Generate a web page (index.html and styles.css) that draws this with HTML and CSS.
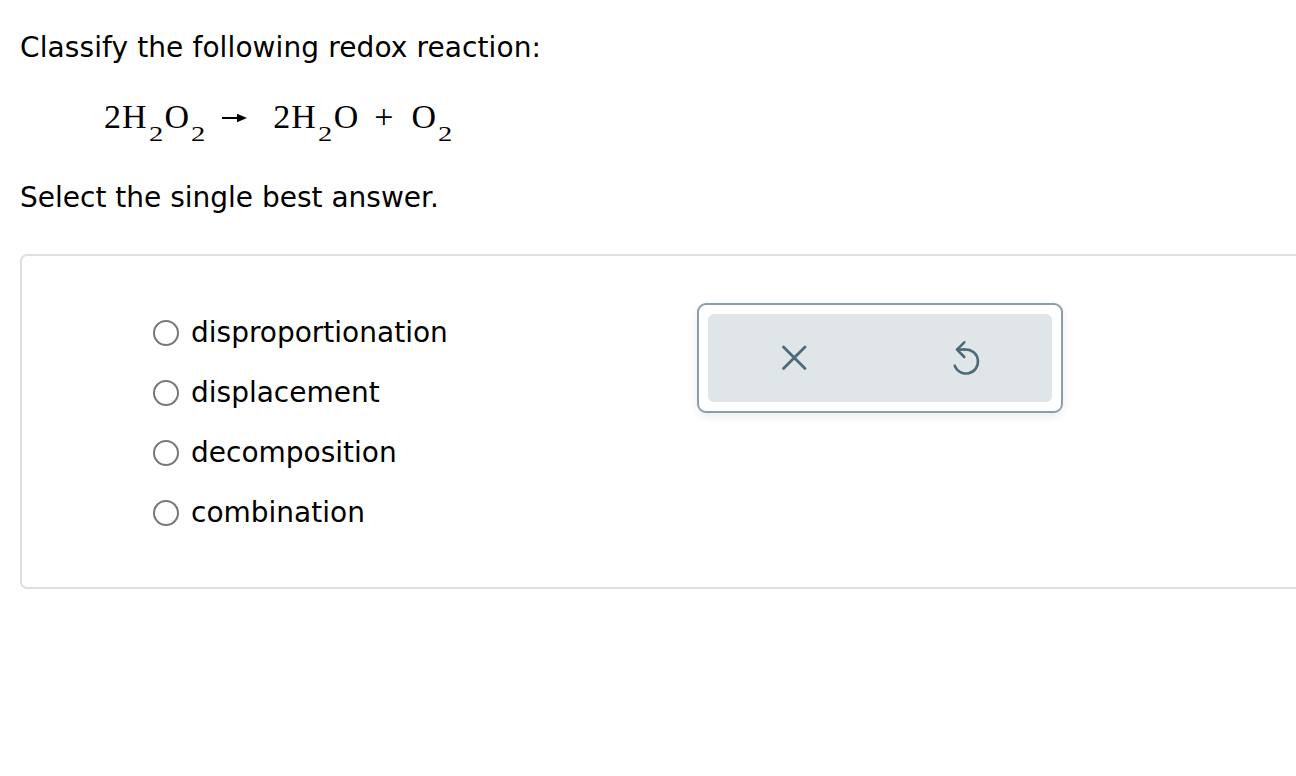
FILE: index.html
```html
<!DOCTYPE html>
<html>
<head>
<meta charset="utf-8">
<link rel="stylesheet" href="styles.css">
</head>
<body>
<div class="page">
  <p class="prompt">Classify the following redox reaction:</p>
  <div class="equation"><span class="term">2H<sub>2</sub>O<sub>2</sub></span><span class="arrow"><svg width="28" height="12" viewBox="0 0 28 12"><line x1="2" y1="6" x2="19" y2="6" stroke="#000" stroke-width="2"/><path d="M17 1.8 L27 6 L17 10.2 Z" fill="#000"/></svg></span><span class="term">2H<sub>2</sub>O</span><span class="plus">+</span><span class="term">O<sub>2</sub></span></div>
  <p class="instruction">Select the single best answer.</p>
  <div class="answer-box">
    <ul class="options">
      <li class="option"><span class="radio"></span><span>disproportionation</span></li>
      <li class="option"><span class="radio"></span><span>displacement</span></li>
      <li class="option"><span class="radio"></span><span>decomposition</span></li>
      <li class="option"><span class="radio"></span><span>combination</span></li>
    </ul>
    <div class="tools">
      <div class="tools-inner">
        <button class="tool" aria-label="Clear">
          <svg width="28" height="28" viewBox="0 0 28 28"><path d="M3.5 3 L25 24.5 M25 3 L3.5 24.5" stroke="#4b6b78" stroke-width="2.8" stroke-linecap="round" fill="none"/></svg>
        </button>
        <button class="tool" aria-label="Undo">
          <svg width="36" height="38" viewBox="0 0 36 38"><path d="M16 10.5 L18 10.5 A12 12 0 1 1 6.7 26.6" stroke="#4b6b78" stroke-width="2.6" stroke-linecap="round" fill="none"/><path d="M16.3 3.3 L9 10.7 L16.3 18" stroke="#4b6b78" stroke-width="2.6" stroke-linecap="round" stroke-linejoin="round" fill="none"/><path d="M9.5 10.6 L17 10.5" stroke="#4b6b78" stroke-width="2.6" stroke-linecap="round" fill="none"/></svg>
        </button>
      </div>
    </div>
  </div>
</div>
</body>
</html>
```
FILE: styles.css
```css
html, body {
  margin: 0;
  padding: 0;
  background: #fff;
}
body {
  font-family: "DejaVu Sans", Verdana, sans-serif;
  color: #000;
}
.page {
  padding: 28px 0 0 20px;
}
.prompt {
  margin: 0;
  font-size: 28px;
  line-height: 40px;
  letter-spacing: 0.1px;
}
.equation {
  margin: 25px 0 0 84px;
  font-family: "Liberation Serif", "Times New Roman", serif;
  font-size: 34px;
  line-height: 48px;
  height: 48px;
  white-space: nowrap;
}
.term {
  letter-spacing: 1px;
}
.equation sub {
  display: inline-block;
  font-size: 22px;
  line-height: 22px;
  letter-spacing: 0;
  vertical-align: -13px;
  margin: 0 5px 0 1px;
  transform: scaleX(1.3);
  transform-origin: left center;
}
.arrow svg {
  vertical-align: 4px;
  margin: 0 25px 0 13px;
}
.plus {
  margin: 0 18px 0 15px;
}
.instruction {
  margin: 37px 0 0 0;
  font-size: 28px;
  line-height: 40px;
}
.answer-box {
  margin-top: 36px;
  border: 2px solid #dadfe2;
  border-right: none;
  border-radius: 7px 0 0 7px;
  height: 335px;
  box-sizing: border-box;
  display: flex;
  align-items: flex-start;
}
.options {
  list-style: none;
  margin: 0;
  padding: 47px 0 0 131px;
  width: 675px;
  box-sizing: border-box;
  flex: none;
}
.option {
  display: flex;
  align-items: center;
  height: 60px;
  line-height: 60px;
  font-size: 28px;
}
.radio {
  width: 26px;
  height: 26px;
  box-sizing: border-box;
  border: 2px solid #777;
  border-radius: 50%;
  margin-right: 12px;
  flex: none;
}
.tools {
  margin-top: 47px;
  width: 366px;
  height: 110px;
  box-sizing: border-box;
  border: 2px solid #8a9fa9;
  border-radius: 9px;
  padding: 9px;
  background: #fff;
  box-shadow: 0 4px 10px rgba(0, 0, 0, 0.08);
  flex: none;
}
.tools-inner {
  background: #e0e5e8;
  border-radius: 6px;
  height: 100%;
  display: flex;
  justify-content: space-around;
  align-items: center;
}
.tool {
  border: none;
  background: transparent;
  padding: 0;
  display: flex;
  width: 44px;
  height: 44px;
  align-items: center;
  justify-content: center;
}
```
